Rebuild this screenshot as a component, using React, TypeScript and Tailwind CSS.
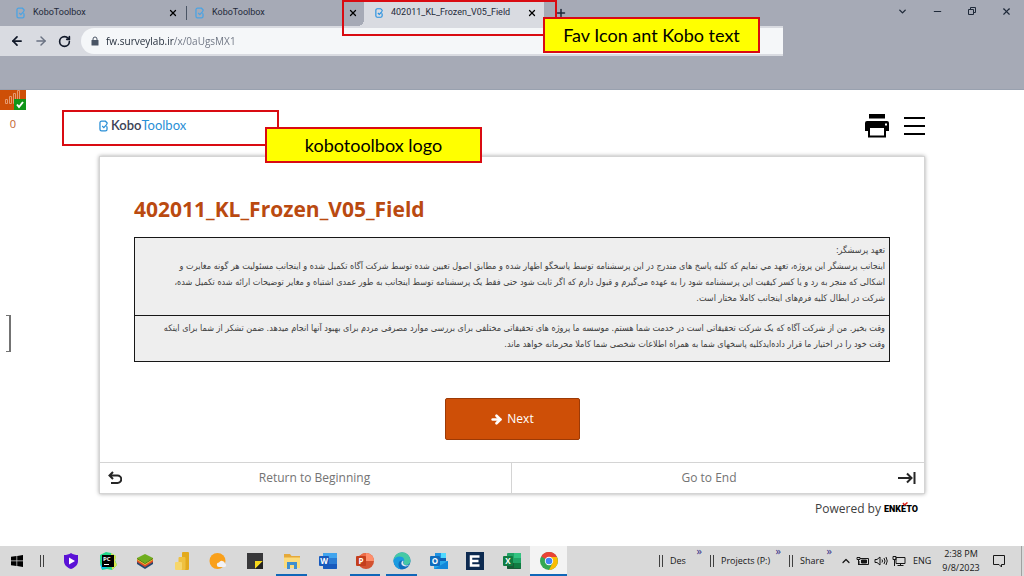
import type { ReactNode } from 'react';
import { ArrowLeft, ArrowRight, ChevronDown, ChevronUp, Minus, Plus, RotateCw, X } from 'lucide-react';

function KoboIcon({ className }: { className: string }) {
  return (
    <svg viewBox="0 0 14 18" className={className} fill="none" stroke="currentColor" strokeWidth="2">
      <path d="M12.500 6V4L10 1.500H4A2.500 2.500 0 0 0 1.500 4v10A2.500 2.500 0 0 0 4 16.500h6a2.500 2.500 0 0 0 2.500-2.500v-2.500a2.500 2.500 0 0 0-1-2" />
      <path d="m5 9 2.500 2.500L12.500 6" />
    </svg>
  );
}

function OfficeIcon({ letter, dark, mid, light }: { letter: string; dark: string; mid: string; light: string }) {
  return (
    <svg viewBox="0 0 20 18" className="h-[18px] w-5">
      <rect x="5" y="1" width="14" height="16" rx="1" fill={mid} />
      <path d="M5 2a1 1 0 0 1 1-1h12a1 1 0 0 1 1 1v4H5z" fill={light} />
      <path d="M5 12h14v4a1 1 0 0 1-1 1H6a1 1 0 0 1-1-1z" fill={dark} />
      <rect x="1" y="4" width="10" height="10" rx="1" fill={dark} />
      <text x="6" y="12" textAnchor="middle" fontSize="8" fontWeight="700" fill="#fff" fontFamily="Open Sans">{letter}</text>
    </svg>
  );
}

const apps: { name: string; open?: boolean; active?: boolean; icon: ReactNode }[] = [
  {
    name: 'VPN',
    icon: (
      <svg viewBox="0 0 18 18" className="size-[18px]">
        <path d="M9 1c2 1.500 4.500 2 7 2v6c0 4-3 6.500-7 8-4-1.500-7-4-7-8V3c2.500 0 5-.5 7-2z" fill="#5b12d6" />
        <path d="m7 5.500 6 3.500-6 3.500z" fill="#fff" />
      </svg>
    ),
  },
  {
    name: 'PyCharm',
    icon: (
      <svg viewBox="0 0 18 18" className="size-[18px]">
        <path d="M1 3 7 0l5 1 5 3-1 4 2 5-5 5-5-1-5 1-2-7z" fill="#21d789" />
        <path d="m12 1 5 3-1 5 2 4-5 5z" fill="#d9e84b" />
        <path d="m1 12 2 5 6-1z" fill="#07c3f2" />
        <rect x="3" y="3" width="12" height="12" fill="#000" />
        <text x="4" y="9" fontSize="6" fontWeight="700" fill="#fff" fontFamily="Open Sans">PC</text>
        <path d="M5 12.500h5" stroke="#fff" />
      </svg>
    ),
  },
  {
    name: 'BlueStacks',
    icon: (
      <svg viewBox="0 0 18 18" className="size-[18px]">
        <path d="M1 10v2l8 5 8-5v-2z" fill="#24476f" />
        <path d="M1 8v2l8 5 8-5V8z" fill="#d94b2b" />
        <path d="M1 6v2l8 5 8-5V6z" fill="#f4c430" />
        <path d="m1 6 8-4 8 4-8 5z" fill="#6fae1f" />
        <path d="m1 6 8 5 8-5v1l-8 5-8-5z" fill="#3d7318" />
      </svg>
    ),
  },
  {
    name: 'Power BI',
    icon: (
      <svg viewBox="0 0 18 18" className="size-[18px]">
        <rect x="9" y="0" width="7" height="18" rx="1" fill="#e3aa1d" />
        <rect x="5.500" y="5" width="7" height="13" rx="1" fill="#efc140" />
        <rect x="2" y="10" width="7" height="8" rx="1" fill="#f6d66b" />
      </svg>
    ),
  },
  {
    name: 'Weather',
    icon: (
      <svg viewBox="0 0 18 18" className="size-[18px]">
        <circle cx="8.500" cy="9" r="8" fill="#f9a01b" />
        <path d="M10 15a2.200 2.200 0 0 1 0-4.400 3.200 3.200 0 0 1 6 1A1.800 1.800 0 0 1 16 15z" fill="#f2f2f5" />
      </svg>
    ),
  },
  {
    name: 'Sticky Notes',
    icon: (
      <svg viewBox="0 0 18 18" className="size-[18px]">
        <path d="M1 1h16v16H1z" fill="#38383a" />
        <path d="M9 9h8l-8 8z" fill="#f8d91c" />
        <path d="M17 9v8H9z" fill="#222" />
      </svg>
    ),
  },
  {
    name: 'File Explorer',
    open: true,
    icon: (
      <svg viewBox="0 0 18 18" className="size-[18px]">
        <path d="M1 2h6l1.500 2H17v12H1z" fill="#e5a93a" />
        <path d="M1 5.500h16V16H1z" fill="#fbdb7c" />
        <path d="M4 17v-7h10v7h-3v-4H7v4z" fill="#3f8fcf" />
      </svg>
    ),
  },
  { name: 'Word', icon: <OfficeIcon letter="W" dark="#185abd" mid="#2b7cd3" light="#41a5ee" /> },
  {
    name: 'PowerPoint',
    open: true,
    icon: (
      <svg viewBox="0 0 20 18" className="h-[18px] w-5">
        <circle cx="11" cy="9" r="8" fill="#d35230" />
        <path d="M11 1a8 8 0 0 1 8 8h-8z" fill="#ff8f6b" />
        <path d="M11 1v8H3a8 8 0 0 1 8-8z" fill="#ed6c47" />
        <rect x="1" y="4" width="10" height="10" rx="1" fill="#c43e1c" />
        <text x="6" y="12" textAnchor="middle" fontSize="8" fontWeight="700" fill="#fff" fontFamily="Open Sans">P</text>
      </svg>
    ),
  },
  {
    name: 'Edge',
    open: true,
    icon: (
      <svg viewBox="0 0 18 18" className="size-[18px]">
        <circle cx="9" cy="9" r="8.500" fill="#0f6cbd" />
        <path d="M.5 9a8.500 8.500 0 0 1 17-.5c0 3-2 4.500-4.500 4.500-2 0-3-.8-2.500-2C11 9 10.500 6 7 6 4 6 1.500 7 .5 9z" fill="#45c9a5" />
        <path d="M.5 9c.5-3 3-4.500 6-4.500 4 0 5.500 3 4.500 5C9.500 8 6 8 5.500 12c-.2 2 .8 4 2.500 5.400A8.500 8.500 0 0 1 .5 9z" fill="#1a9be0" />
        <path d="M10 8.500c1 1-.5 2 .5 3.500s4 2 6 .5c-1.500 2-4 2.500-6 1.500-2.500-1-3-4-.5-5.500z" fill="#dbe8f0" />
      </svg>
    ),
  },
  {
    name: 'Outlook',
    icon: (
      <svg viewBox="0 0 20 18" className="h-[18px] w-5">
        <rect x="6" y="1" width="11" height="11" fill="#0f5fb0" />
        <path d="M12 1h5v5h-5z" fill="#50d9ff" />
        <path d="M6 1h6v5H6z" fill="#1f93e3" />
        <path d="M5 9h14v8H5z" fill="#28a8ea" />
        <path d="m5 17 14-8v8z" fill="#1387d9" />
        <rect x="1" y="4" width="10" height="10" rx="1" fill="#0f6cbd" />
        <text x="6" y="12" textAnchor="middle" fontSize="8" fontWeight="700" fill="#fff" fontFamily="Open Sans">O</text>
      </svg>
    ),
  },
  {
    name: 'E',
    icon: (
      <svg viewBox="0 0 18 18" className="size-[18px]">
        <rect width="18" height="18" fill="#0d2a50" />
        <path d="M13.500 4.500H5v9h8.500M5 9h7.500" fill="none" stroke="#fff" strokeWidth="2.500" />
      </svg>
    ),
  },
  {
    name: 'Excel',
    icon: (
      <svg viewBox="0 0 20 18" className="h-[18px] w-5">
        <rect x="5" y="1" width="14" height="16" rx="1" fill="#21a366" />
        <path d="M12 1h6a1 1 0 0 1 1 1v4h-7z" fill="#33c481" />
        <path d="M5 11h14v5a1 1 0 0 1-1 1H6a1 1 0 0 1-1-1z" fill="#185c37" />
        <path d="M12 11h7v5h-7z" fill="#107c41" />
        <rect x="1" y="4" width="10" height="10" rx="1" fill="#107c41" />
        <text x="6" y="12" textAnchor="middle" fontSize="8" fontWeight="700" fill="#fff" fontFamily="Open Sans">X</text>
      </svg>
    ),
  },
  {
    name: 'Chrome',
    open: true,
    active: true,
    icon: (
      <svg viewBox="0 0 18 18" className="size-[18px]">
        <circle cx="9" cy="9" r="9" fill="#34a853" />
        <path d="M9 9 1.200 4.500a9 9 0 0 1 15.600 0L17 5H9z" fill="#ea4335" />
        <path d="M9 5h7.900A9 9 0 0 1 9 18l3.500-7z" fill="#fbbc04" />
        <circle cx="9" cy="9" r="4.200" fill="#fff" />
        <circle cx="9" cy="9" r="3.300" fill="#4285f4" />
      </svg>
    ),
  },
];

const toolbars = [
  { name: 'Des', width: 'w-[51px]' },
  { name: 'Projects (P:)', width: 'w-[79px]' },
  { name: 'Share', width: 'w-[51px]' },
];

function Grip() {
  return <span className="h-3 w-1 shrink-0 border-x border-neutral-700" />;
}

function BrowserHeader() {
  return (
    <header className="h-[90px] border-b border-gray-400 bg-[#a6aab6]">
      <div className="flex h-[26px] items-center font-['Roboto',sans-serif] text-[9px] text-gray-800">
        <div className="flex w-[187px] items-center border-r border-gray-600 pr-2 pl-4">
          <KoboIcon className="mr-2 h-[12px] w-[9px] text-[#4ba3e3]" />
          <span className="flex-1">KoboToolbox</span>
          <button aria-label="Close tab" className="text-black"><X className="size-[10px]" strokeWidth={3} /></button>
        </div>
        <div className="flex w-[177px] items-center pr-1.5 pl-2">
          <KoboIcon className="mr-2 h-[12px] w-[9px] text-[#4ba3e3]" />
          <span className="flex-1">KoboToolbox</span>
          <button aria-label="Close tab" className="text-black"><X className="size-[10px]" strokeWidth={3} /></button>
        </div>
        <div className="relative flex w-[180px] items-center self-stretch bg-[#d9dbe1] pr-[7px] pl-[11px] before:absolute before:right-full before:bottom-0 before:size-1.5 before:bg-[radial-gradient(circle_at_0_0,transparent_6px,#d9dbe1_6px)]">
          <KoboIcon className="mr-2 h-[12px] w-[8px] text-[#2490e0]" />
          <span className="flex-1">402011_KL_Frozen_V05_Field</span>
          <button aria-label="Close tab" className="text-black"><X className="size-[10px]" strokeWidth={3} /></button>
        </div>
        <button aria-label="New tab" className="ml-[11px]"><Plus className="size-3" strokeWidth={3} /></button>
        <div className="mr-3 mb-1 ml-auto flex gap-6">
          <button aria-label="Search tabs"><ChevronDown className="size-[11px]" strokeWidth={3} /></button>
          <button aria-label="Minimize"><Minus className="size-[11px]" strokeWidth={2.500} /></button>
          <button aria-label="Restore">
            <svg viewBox="0 0 10 10" className="size-[10px]" fill="none" stroke="currentColor">
              <path d="M1.500 3.500h5v5h-5zM3.500 3V1.500h5v5H7" />
            </svg>
          </button>
          <button aria-label="Close window"><X className="size-[11px]" strokeWidth={2.500} /></button>
        </div>
      </div>
      <div className="flex h-[30px] w-[783px] items-center bg-[#d9dbe1] pl-2.5 text-gray-900">
        <button aria-label="Back"><ArrowLeft className="size-[14px]" strokeWidth={3} /></button>
        <button aria-label="Forward" className="ml-2.5 text-gray-500"><ArrowRight className="size-[14px]" strokeWidth={2.500} /></button>
        <button aria-label="Reload" className="mr-2.5 ml-2.5"><RotateCw className="size-[13px]" strokeWidth={3} /></button>
        <div className="flex h-[26px] flex-1 items-center rounded-l-full bg-[#f5f7f9] pl-2.5">
          <svg viewBox="0 0 8 10" className="mr-[7px] h-[10px] w-2 text-gray-600">
            <path d="M2 4V3a2 2 0 0 1 4 0v1" fill="none" stroke="currentColor" />
            <rect x="0.500" y="4" width="7" height="5.500" rx="0.500" fill="currentColor" />
          </svg>
          {/* host is darker than the rest of the address */}
          <input
            aria-label="Address"
            defaultValue="fw.surveylab.ir/x/0aUgsMX1"
            className="flex-1 bg-[linear-gradient(to_right,#1f2937_68px,#6b7280_68px)] bg-clip-text text-[10px] text-transparent outline-none"
          />
        </div>
      </div>
    </header>
  );
}

function Taskbar() {
  return (
    <footer className="flex h-[30px] items-stretch bg-[#d9d9d9] text-[9px] text-neutral-900">
      <button aria-label="Start" className="flex w-[34px] items-center justify-center">
        <svg viewBox="0 0 12 12" className="size-3">
          <path d="M0 1.800 5.500 1v4.600H0zM6.200.9 12 0v5.600H6.200zM0 6.300h5.500V11L0 10.200zM6.200 6.300H12V12l-5.800-.9z" />
        </svg>
      </button>
      <div className="flex w-[19px] items-center pl-1.5"><Grip /></div>
      <div className="flex w-[514px]">
        {apps.map((app) => (
          <button
            key={app.name}
            aria-label={app.name}
            className={`relative flex flex-1 items-center justify-center ${app.active ? 'bg-[#f3f3f3]' : ''}`}
          >
            {app.icon}
            {app.open && (
              <span className={`absolute bottom-0 h-0.5 bg-[#1067b8] ${app.active ? 'inset-x-0' : 'inset-x-[3px]'}`} />
            )}
          </button>
        ))}
      </div>
      <div className="ml-auto flex items-center">
        {toolbars.map((bar) => (
          <div key={bar.name} className={`flex h-full items-center ${bar.width}`}>
            <Grip />
            <span className="ml-[7px] whitespace-nowrap">{bar.name}</span>
            <button aria-label={`More ${bar.name}`} className="mr-2 ml-auto self-start text-[11px] leading-[10px] text-indigo-900">»</button>
          </div>
        ))}
        <button aria-label="Show hidden icons"><ChevronUp className="size-3" strokeWidth={2.500} /></button>
        <svg viewBox="0 0 14 12" className="ml-1 h-3 w-[14px]" fill="none" stroke="currentColor">
          <path d="M4 3.500h8.500v6H3V6" />
          <path d="M5.500 5h5v3h-5z" fill="currentColor" />
          <path d="M1 2.500h3v2H1zM2.500 5v5" />
        </svg>
        <svg viewBox="0 0 14 12" className="ml-1 h-3 w-[14px]" fill="none" stroke="currentColor">
          <path d="M1 4.500h2L6 2v8L3 7.500H1zM8 4.500q1 1.500 0 3M10 3q2 3 0 6M12 2q2.500 4 0 8" />
        </svg>
        <svg viewBox="0 0 14 12" className="ml-1 h-3 w-[14px]" fill="none" stroke="currentColor">
          <path d="M4 2.500h9v6H4zM8.500 9v2M5.500 10.500h6M1 1.500h3v3H1zM2.500 5v6" />
        </svg>
        <span className="ml-[7px] w-[18px]">ENG</span>
        <div className="ml-2 w-11 text-center leading-[14px]">
          <p>2:38 PM</p>
          <p>9/8/2023</p>
        </div>
        <button aria-label="Notifications" className="mr-[15px] ml-[9px]">
          <svg viewBox="0 0 14 14" className="size-[14px]" fill="none" stroke="currentColor">
            <path d="M1.500 1.500h11v9h-3v2.500L7 10.500H1.500z" />
          </svg>
        </button>
        <span className="mr-0.5 h-full w-px bg-neutral-400" />
      </div>
    </footer>
  );
}

function FormCard() {
  return (
    <section className="border border-neutral-300 bg-white shadow-[0_0_4px_rgba(0,0,0,0.35)]">
      <div className="px-[34px] pt-9">
        <h1 className="text-[21px] leading-8 font-bold text-[#ba4a10]">402011_KL_Frozen_V05_Field</h1>
        <table dir="rtl" className="mt-3 w-full border-collapse bg-[#eeeeee] font-['DejaVu_Sans_Condensed','DejaVu_Sans',sans-serif] text-[9px] leading-4 text-neutral-700">
          <tbody>
            <tr>
              <td className="border border-neutral-900 px-1 pt-1 pb-[9px] whitespace-nowrap">
                تعهد پرسشگر:<br />
                اینجانب پرسشگر این پروژه، تعهد مي نمایم که کلیه پاسخ های مندرج در این پرسشنامه توسط پاسخگو اظهار شده و مطابق اصول تعیین شده توسط شرکت آگاه تکمیل شده و اینجانب مسئولیت هر گونه مغایرت و<br />
                اشکالی که منجر به رد و یا کسر کیفیت این پرسشنامه شود را به عهده می‌گیرم و قبول دارم که اگر ثابت شود حتی فقط یک پرسشنامه توسط اینجانب به طور عمدی اشتباه و مغایر توضیحات ارائه شده تکمیل شده،<br />
                شرکت در ابطال کلیه فرم‌های اینجانب کاملا مختار است.
              </td>
            </tr>
            <tr>
              <td className="border border-neutral-900 px-1 pt-1 pb-[9px] whitespace-nowrap">
                وقت بخیر. من از شرکت آگاه که یک شرکت تحقیقاتی است در خدمت شما هستم. موسسه ما پروژه های تحقیقاتی مختلفی برای بررسی موارد مصرفی مردم برای بهبود آنها انجام میدهد. ضمن تشکر از شما برای اینکه<br />
                وقت خود را در اختیار ما قرار داده‌ایدکلیه پاسخهای شما به همراه اطلاعات شخصی شما کاملا محرمانه خواهد ماند.
              </td>
            </tr>
          </tbody>
        </table>
      </div>
      <button className="mx-auto mt-9 mb-[22px] flex h-[42px] w-[135px] items-center justify-center gap-1 rounded-xs border border-[#9c3a06] bg-[#ce4f07] text-[12px] font-medium text-white">
        <ArrowRight className="size-[13px]" strokeWidth={5} />
        Next
      </button>
      <nav className="grid grid-cols-2 border-t border-neutral-300 text-[12px] text-neutral-500">
        <a href="#start" className="flex h-[30px] items-center border-r border-neutral-300 pr-1 pl-2">
          <svg viewBox="0 0 14 14" className="size-[14px] text-neutral-800" fill="none" stroke="currentColor" strokeWidth="2">
            <path d="M5 1 1.500 4.500 5 8M2 4.500h7.500a3.500 3.500 0 0 1 0 7.500H3" />
          </svg>
          <span className="flex-1 text-center">Return to Beginning</span>
        </a>
        <a href="#end" className="flex h-[30px] items-center px-2">
          <span className="flex-1 text-center">Go to End</span>
          <svg viewBox="0 0 18 14" className="h-[14px] w-[18px] text-neutral-800" fill="none" stroke="currentColor" strokeWidth="2">
            <path d="M0 7h13M9 2.500 13.500 7 9 11.500M16.500 1v12" />
          </svg>
        </a>
      </nav>
    </section>
  );
}

export default function App() {
  return (
    <div className="relative flex min-h-screen flex-col overflow-hidden bg-white font-['Open_Sans',sans-serif]">
      <BrowserHeader />

      <main className="relative flex-1 px-[99px]">
        {/* Offline status */}
        <div className="absolute top-0 left-0 w-[26px] text-center text-[11px] text-[#c4622d]">
          <svg viewBox="0 0 26 20" className="h-5 w-[26px]">
            <path d="M0 0h26v20H0z" fill="#ce4f07" />
            <path d="M5.500 9.500h2v4h-2zM9.500 6.500h2v7h-2zM13.500 3.500h2v10h-2zM17.500 .5h2v13h-2z" fill="none" stroke="#e59a70" />
            <path d="M14 9h12v11H14z" fill="#109618" />
            <path d="m17 14.500 2 2.500 4-5" fill="none" stroke="#fff" strokeWidth="2" />
          </svg>
          <p className="mt-1.5 leading-4">0</p>
        </div>
        <span className="absolute top-[225px] left-1.5 h-[37px] w-[5px] border-y border-r-2 border-neutral-500" />

        <div className="flex h-[66px] items-center pt-1.5">
          <a href="#home" className="flex items-center font-['Lato',sans-serif] text-[13px] text-[#2a8fd6]">
            <KoboIcon className="mr-[3px] h-3 w-[9px]" />
            <span className="font-semibold text-[#3b4256]">Kobo</span>Toolbox
          </a>
          <button aria-label="Print" className="ml-auto">
            <svg viewBox="0 0 24 24" className="size-6">
              <path d="M4 0h16v4.500H4zM2 7h20a2 2 0 0 1 2 2v8h-3v6.500H3V17H0V9a2 2 0 0 1 2-2zm3 7v7.500h14V14zm15-4.500v2h2v-2z" fillRule="evenodd" />
            </svg>
          </button>
          <button aria-label="Menu" className="ml-[15px]">
            <svg viewBox="0 0 21 18" className="h-[18px] w-[21px]" stroke="currentColor" strokeWidth="2">
              <path d="M0 1h21M0 9h21M0 17h21" />
            </svg>
          </button>
        </div>

        <FormCard />

        <p className="mt-1.5 flex items-center justify-end gap-[3px] pr-[7px] text-[12px] leading-[18px] text-neutral-700">
          Powered by
          <a href="#enketo" className="relative font-['Roboto',sans-serif] text-[9px] font-black text-black">
            ENKETO
            <svg viewBox="0 0 6 4" className="absolute top-0.5 left-[18px] h-1 w-1.5" fill="none" stroke="#e0241b" strokeWidth="1.500">
              <path d="m1 1 1.500 2L5.500.5" />
            </svg>
          </a>
        </p>
      </main>

      <Taskbar />

      {/* Callouts drawn over the window */}
      <div className="absolute top-0 left-[342px] h-9 w-[215px] border-2 border-[#d90b12]" />
      <div className="absolute top-[17px] left-[543px] flex h-9 w-[217px] items-center justify-center border-2 border-[#d90b12] bg-[#ffff00] font-['Lato',sans-serif] text-[18px] text-black">
        Fav Icon ant Kobo text
      </div>
      <div className="absolute top-[110px] left-[62px] h-9 w-[217px] border-2 border-[#d90b12]" />
      <div className="absolute top-[127px] left-[265px] flex h-9 w-[217px] items-center justify-center border-2 border-[#d90b12] bg-[#ffff00] font-['Lato',sans-serif] text-[18px] text-black">
        kobotoolbox logo
      </div>
    </div>
  );
}
